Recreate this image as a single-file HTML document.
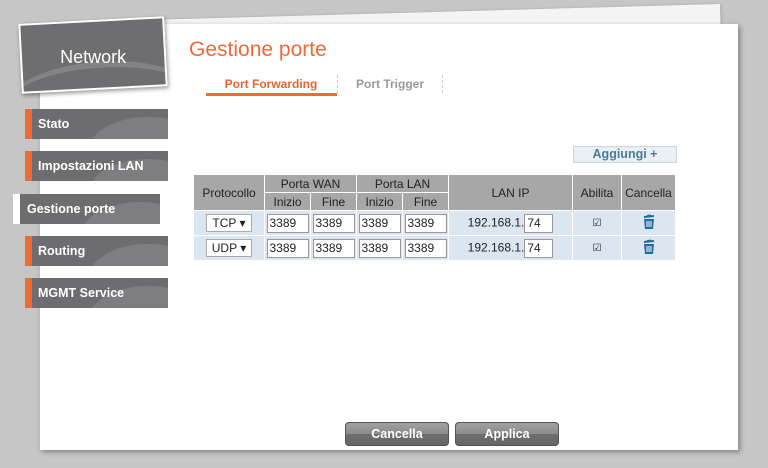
<!DOCTYPE html>
<html><head><style>
body{margin:0;width:768px;height:468px;background:#c6c6c6;position:relative;overflow:hidden;font-family:"Liberation Sans",Arial,sans-serif}
.back{position:absolute;left:150px;top:4px;width:570px;height:60px;background:#f4f4f4;transform:rotate(-1.6deg);transform-origin:right top;box-shadow:0 1px 3px rgba(0,0,0,.3)}
.main{position:absolute;left:40px;top:24px;width:698px;height:426px;background:#fff;box-shadow:2px 2px 5px rgba(0,0,0,.35)}
.card{position:absolute;left:20px;top:20px;width:142px;height:66px;background:#6e6e70;border:2px solid #fff;transform:rotate(-3deg);box-shadow:1px 2px 4px rgba(0,0,0,.4);color:#fff;font-size:18px;text-align:center;line-height:70px;overflow:hidden}
.card span{display:inline-block;transform:rotate(3deg)}
.card:after{content:"";position:absolute;left:-20px;top:40px;width:200px;height:80px;border-radius:50%;border-top:6px solid rgba(255,255,255,.15)}
.nav{position:absolute;left:25px;width:143px;height:30px;background:#6d6d6f;color:#fff;font-weight:bold;font-size:12.5px;line-height:30px;box-sizing:border-box;padding-left:6px;border-left:7px solid #ee6b36;overflow:hidden}
.nav:after{content:"";position:absolute;right:-40px;top:8px;width:120px;height:70px;border-radius:50%;background:rgba(255,255,255,.12)}
h1{position:absolute;left:189px;top:38px;margin:0;font-weight:normal;color:#ec6a3c;font-size:21px}
.tab1{position:absolute;left:206px;top:77px;width:130px;text-align:center;color:#e8642f;font-weight:bold;font-size:12px}
.tabl{position:absolute;left:206px;top:93px;width:131px;height:3px;background:#ec6a3c}
.tab2{position:absolute;left:356px;top:77px;color:#9a9a9a;font-weight:bold;font-size:12px}
.sep{position:absolute;top:75px;height:18px;border-left:1px dashed #ccc}
.add{position:absolute;left:573px;top:146px;width:102px;height:15px;background:#eaf0f4;border:1px solid #c9d6df;color:#4d7c96;font-weight:bold;font-size:12.5px;text-align:center;line-height:15px}
table{position:absolute;left:193px;top:174px;border-collapse:separate;border-spacing:1px;font-size:12px;color:#222}
th{background:#a7a7a7;font-weight:normal;height:17px;padding:0}
td{background:#dce6f0;height:24px;padding:0;text-align:center}
.in{display:inline-block;width:38px;height:17px;border:1px solid #999;background:#fff;text-align:left;line-height:17px;padding-left:2px;vertical-align:middle}
.sel{display:inline-block;width:44px;height:16px;border:1px solid #aaa;background:#fff;line-height:16px;font-size:12px}
.btn{position:absolute;top:422px;width:104px;height:24px;border-radius:4px;background:linear-gradient(#a3a3a3,#8a8a8a 50%,#6e6e6e 50%,#666);color:#fff;font-weight:bold;font-size:12.5px;text-align:center;line-height:24px;box-shadow:0 0 0 1px #555 inset}
</style></head><body>
<div class="back"></div>
<div class="main"></div>
<div class="card"><span>Network</span></div>
<div class="nav" style="top:109px">Stato</div>
<div class="nav" style="top:151px">Impostazioni LAN</div>
<div class="nav" style="top:194px;left:13px;width:147px;border-left-color:#fff;padding-left:7px">Gestione porte</div>
<div class="nav" style="top:236px">Routing</div>
<div class="nav" style="top:278px">MGMT Service</div>
<h1>Gestione porte</h1>
<div class="tab1">Port Forwarding</div><div class="tabl"></div>
<div class="sep" style="left:337px"></div>
<div class="tab2">Port Trigger</div>
<div class="sep" style="left:442px"></div>
<div class="add">Aggiungi +</div>
<table>
<tr><th rowspan="2" style="width:70px">Protocollo</th><th colspan="2">Porta WAN</th><th colspan="2">Porta LAN</th><th rowspan="2" style="width:123px">LAN IP</th><th rowspan="2" style="width:48px">Abilita</th><th rowspan="2" style="width:53px">Cancella</th></tr>
<tr><th style="width:45px">Inizio</th><th style="width:45px">Fine</th><th style="width:45px">Inizio</th><th style="width:45px">Fine</th></tr>
<tr><td><span class="sel">TCP ▾</span></td><td><span class="in">3389</span></td><td><span class="in">3389</span></td><td><span class="in">3389</span></td><td><span class="in">3389</span></td><td>192.168.1.<span class="in" style="width:25px">74</span></td><td style="font-size:10px">☑</td><td><svg width="14" height="16" viewBox="0 0 14 16"><path d="M2 3 L12 2 M5 2 L9 1.5" stroke="#1f6d9e" stroke-width="2" fill="none"/><path d="M2 5 H12 L11 15 H3 Z" fill="#1f6d9e"/><path d="M5 7 V13 M7 7 V13 M9 7 V13" stroke="#fff" stroke-width="1"/></svg></td></tr>
<tr><td><span class="sel">UDP ▾</span></td><td><span class="in">3389</span></td><td><span class="in">3389</span></td><td><span class="in">3389</span></td><td><span class="in">3389</span></td><td>192.168.1.<span class="in" style="width:25px">74</span></td><td style="font-size:10px">☑</td><td><svg width="14" height="16" viewBox="0 0 14 16"><path d="M2 3 L12 2 M5 2 L9 1.5" stroke="#1f6d9e" stroke-width="2" fill="none"/><path d="M2 5 H12 L11 15 H3 Z" fill="#1f6d9e"/><path d="M5 7 V13 M7 7 V13 M9 7 V13" stroke="#fff" stroke-width="1"/></svg></td></tr>
</table>
<div class="btn" style="left:345px">Cancella</div>
<div class="btn" style="left:455px">Applica</div>
</body></html>
